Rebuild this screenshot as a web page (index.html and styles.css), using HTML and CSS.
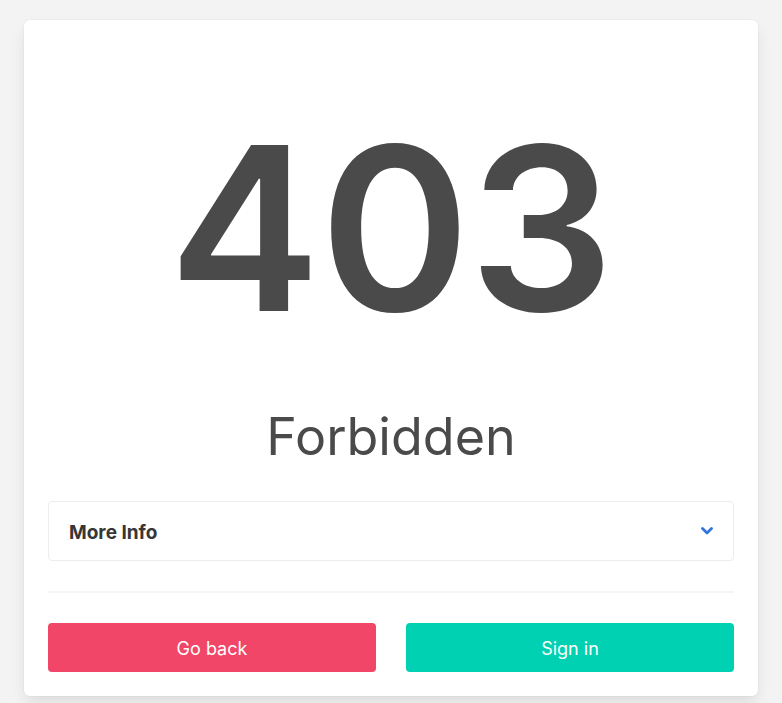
FILE: index.html
```html
<!DOCTYPE html>
<html lang="en">
<head>
<meta charset="utf-8">
<title>403 Forbidden</title>
<link rel="stylesheet" href="styles.css">
</head>
<body>
<main class="card">
  <h1 class="code">403</h1>
  <h2 class="status">Forbidden</h2>
  <div class="more">
    <span class="more-label">More Info</span>
    <svg class="chevron" width="12" height="8" viewBox="0 0 12 8" aria-hidden="true">
      <polyline points="1.5,1.5 6,6 10.5,1.5" fill="none" stroke="#3273dc" stroke-width="2.8" stroke-linecap="round" stroke-linejoin="round"/>
    </svg>
  </div>
  <hr class="divider">
  <div class="actions">
    <button class="btn btn-back">Go back</button>
    <button class="btn btn-signin">Sign in</button>
  </div>
</main>
</body>
</html>
```

FILE: styles.css
```css
html, body {
  margin: 0;
  padding: 0;
}
body {
  background: #f3f3f3;
  font-family: Inter, "Noto Sans", "Liberation Sans", sans-serif;
  color: #4a4a4a;
  padding: 20px 24px 7px;
}
.card {
  background: #fff;
  border-radius: 6px;
  box-shadow: 0 8px 16px -2px rgba(10, 10, 10, 0.1), 0 0 0 1px rgba(10, 10, 10, 0.02);
  padding: 24px;
  display: flex;
  flex-direction: column;
}
.code {
  margin: 70px 0 0;
  font-size: 228px;
  line-height: 228px;
  font-weight: 600;
  text-align: center;
  color: #4a4a4a;
  letter-spacing: -1px;
}
.status {
  margin: 69px 0 0;
  font-size: 52px;
  line-height: 52px;
  font-weight: 400;
  text-align: center;
  color: #4a4a4a;
}
.more {
  margin-top: 38px;
  height: 58px;
  border: 1px solid #ededed;
  border-radius: 4px;
  display: flex;
  align-items: center;
  justify-content: space-between;
  padding: 0 20px;
}
.more-label {
  font-size: 19px;
  font-weight: 700;
  color: #363636;
  padding-top: 2px;
}
.chevron {
  display: block;
}
.divider {
  margin: 30px 0 0;
  border: none;
  height: 2px;
  background: #f5f5f5;
}
.actions {
  margin-top: 30px;
  display: grid;
  grid-template-columns: 1fr 1fr;
  gap: 30px;
}
.btn {
  height: 49px;
  border: none;
  border-radius: 4px;
  color: #fff;
  font-family: inherit;
  font-size: 18px;
  padding-top: 2px;
  cursor: pointer;
}
.btn-back {
  background: #f14668;
}
.btn-signin {
  background: #00d1b2;
}
```
